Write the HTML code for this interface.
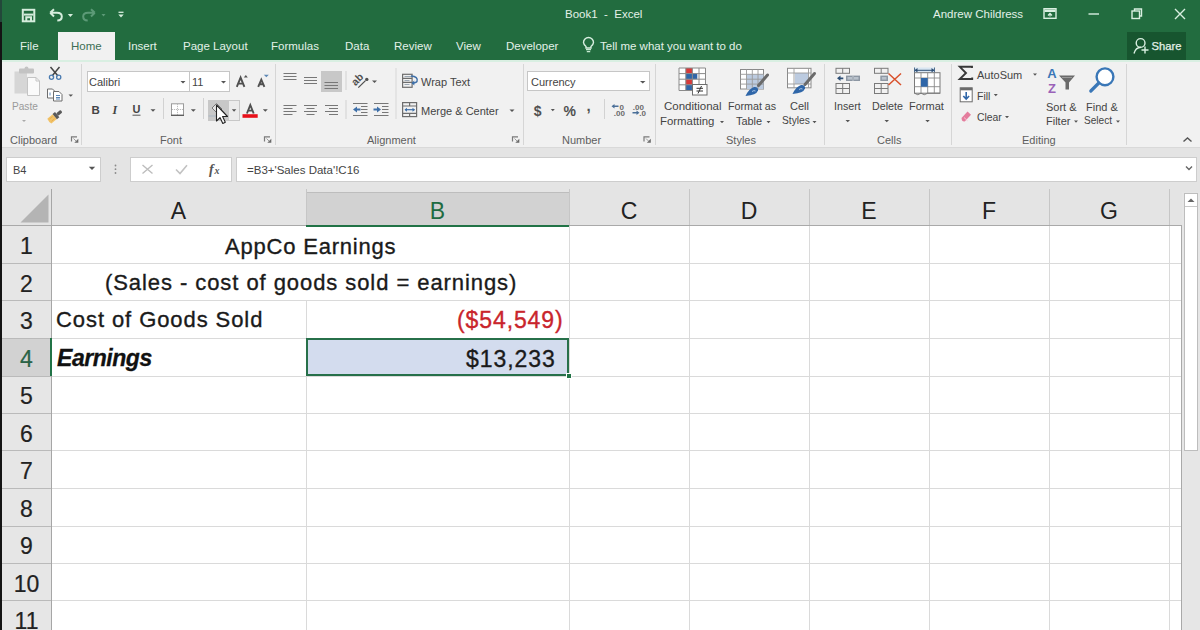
<!DOCTYPE html>
<html><head><meta charset="utf-8">
<style>
*{margin:0;padding:0;box-sizing:border-box}
html,body{width:1200px;height:630px;overflow:hidden;background:#fff;font-family:"Liberation Sans",sans-serif}
.a{position:absolute}
.t{position:absolute;white-space:pre;line-height:1}
#title{left:0;top:0;width:1200px;height:60px;background:#226c3f}
.tab{color:#e3f1e8;font-size:11.5px;top:41px}
.rib{left:0;top:60px;width:1200px;height:87px;background:#f1f1f1;border-top:2px solid #d9efe2}
.sep{position:absolute;width:1px;background:#d6d6d6}
.gl{color:#5e5e5e;font-size:11px;top:134.5px}
.rt{color:#444;font-size:11px}
.dd{position:absolute;width:0;height:0;border-left:2.5px solid transparent;border-right:2.5px solid transparent;border-top:3px solid #555}
.hl{position:absolute;height:1px;background:#d9d9d9}
.vl{position:absolute;width:1px;background:#d9d9d9}
.ch{position:absolute;top:192px;height:34px;background:#e6e6e6;font-size:23px;color:#222;text-align:center;line-height:34px}
.rh{position:absolute;left:2px;width:49px;background:#e6e6e6;font-size:22px;color:#222;text-align:center}
</style></head><body>
<!-- left dark strip -->

<div id="title" class="a"></div>
<!-- title bar text -->
<div class="t" style="left:565px;top:9px;font-size:11.5px;color:#e3f1e8">Book1  -  Excel</div>
<div class="t" style="left:933px;top:9px;font-size:11.5px;color:#e3f1e8">Andrew Childress</div>
<!-- tabs -->
<div class="a" style="left:58px;top:32px;width:57px;height:29px;background:#f1f1f1"></div>
<div class="t tab" style="left:20px">File</div>
<div class="t tab" style="left:71px;color:#3c6e55">Home</div>
<div class="t tab" style="left:128px">Insert</div>
<div class="t tab" style="left:183px">Page Layout</div>
<div class="t tab" style="left:271px">Formulas</div>
<div class="t tab" style="left:345px">Data</div>
<div class="t tab" style="left:394px">Review</div>
<div class="t tab" style="left:456px">View</div>
<div class="t tab" style="left:506px">Developer</div>
<div class="t tab" style="left:600px">Tell me what you want to do</div>
<div class="a" style="left:1127px;top:32px;width:59px;height:28px;background:#17552f"></div>
<div class="t tab" style="left:1151.5px;font-size:11.2px;-webkit-text-stroke:0.25px #e3f1e8">Share</div>

<!-- ribbon -->
<div class="a rib"></div>
<div class="a" style="left:0;top:147px;width:1200px;height:46px;background:#e4e4e4;border-top:1px solid #d9d9d9"></div>

<!-- group labels -->
<div class="t gl" style="left:10px">Clipboard</div>
<div class="t gl" style="left:160px">Font</div>
<div class="t gl" style="left:367px">Alignment</div>
<div class="t gl" style="left:562px">Number</div>
<div class="t gl" style="left:726px">Styles</div>
<div class="t gl" style="left:877px">Cells</div>
<div class="t gl" style="left:1022px">Editing</div>
<div class="sep" style="left:81px;top:64px;height:81px"></div>
<div class="sep" style="left:275px;top:64px;height:81px"></div>
<div class="sep" style="left:523px;top:64px;height:81px"></div>
<div class="sep" style="left:655px;top:64px;height:81px"></div>
<div class="sep" style="left:824px;top:64px;height:81px"></div>
<div class="sep" style="left:951px;top:64px;height:81px"></div>
<div class="sep" style="left:1126px;top:64px;height:81px"></div>

<!-- formula bar -->
<div class="a" style="left:6px;top:157px;width:95px;height:25px;background:#fff;border:1px solid #cdcdcd"></div>
<div class="t" style="left:13px;top:165px;font-size:11px;color:#444">B4</div>
<div class="a" style="left:130px;top:157px;width:102px;height:25px;background:#fff;border:1px solid #cdcdcd"></div>
<div class="a" style="left:236px;top:157px;width:961px;height:25px;background:#fff;border:1px solid #cdcdcd"></div>
<div class="t" style="left:247px;top:165px;font-size:11.5px;color:#444">=B3+'Sales Data'!C16</div>

<!-- sheet -->
<div class="a" style="left:2px;top:187px;width:1180px;height:39px;background:#e4e4e4"></div>
<div class="a" style="left:2px;top:226px;width:49px;height:404px;background:#e6e6e6"></div>
<div class="a" style="left:51px;top:226px;width:1131px;height:404px;background:#fff"></div>
<div class="a" style="left:2px;top:225px;width:1180px;height:1px;background:#a9a9a9"></div>
<div class="a" style="left:306px;top:191.5px;width:263px;height:34px;background:#d2d2d2;border-top:1px solid #bdbdbd;border-left:1px solid #bdbdbd"></div>
<div class="a" style="left:306px;top:225px;width:263px;height:2px;background:#217346"></div>
<div class="a" style="left:2px;top:338px;width:49px;height:38px;background:#d2d2d2"></div>
<svg class="a" style="left:0;top:185px" width="60" height="45"><polygon points="20.5,37.5 48.5,9.5 48.5,37.5" fill="#b4b4b4"/></svg>
<div class="a" style="left:306px;top:189px;width:1px;height:36px;background:#c6c6c6"></div>
<div class="a" style="left:569px;top:189px;width:1px;height:36px;background:#c6c6c6"></div>
<div class="a" style="left:689px;top:189px;width:1px;height:36px;background:#c6c6c6"></div>
<div class="a" style="left:809px;top:189px;width:1px;height:36px;background:#c6c6c6"></div>
<div class="a" style="left:929px;top:189px;width:1px;height:36px;background:#c6c6c6"></div>
<div class="a" style="left:1049px;top:189px;width:1px;height:36px;background:#c6c6c6"></div>
<div class="a" style="left:1169px;top:189px;width:1px;height:36px;background:#c6c6c6"></div>
<div class="a" style="left:51px;top:189px;width:1px;height:441px;background:#a6a6a6"></div>
<div class="a" style="left:2px;top:263px;width:49px;height:1px;background:#bababa"></div>
<div class="a" style="left:569px;top:263px;width:613px;height:1px;background:#dadada"></div>
<div class="a" style="left:52px;top:263px;width:517px;height:1px;background:#dadada"></div>
<div class="a" style="left:2px;top:300px;width:49px;height:1px;background:#bababa"></div>
<div class="a" style="left:52px;top:300px;width:1130px;height:1px;background:#dadada"></div>
<div class="a" style="left:2px;top:338px;width:49px;height:1px;background:#bababa"></div>
<div class="a" style="left:52px;top:338px;width:1130px;height:1px;background:#dadada"></div>
<div class="a" style="left:2px;top:376px;width:49px;height:1px;background:#bababa"></div>
<div class="a" style="left:52px;top:376px;width:1130px;height:1px;background:#dadada"></div>
<div class="a" style="left:2px;top:413px;width:49px;height:1px;background:#bababa"></div>
<div class="a" style="left:52px;top:413px;width:1130px;height:1px;background:#dadada"></div>
<div class="a" style="left:2px;top:450px;width:49px;height:1px;background:#bababa"></div>
<div class="a" style="left:52px;top:450px;width:1130px;height:1px;background:#dadada"></div>
<div class="a" style="left:2px;top:488px;width:49px;height:1px;background:#bababa"></div>
<div class="a" style="left:52px;top:488px;width:1130px;height:1px;background:#dadada"></div>
<div class="a" style="left:2px;top:526px;width:49px;height:1px;background:#bababa"></div>
<div class="a" style="left:52px;top:526px;width:1130px;height:1px;background:#dadada"></div>
<div class="a" style="left:2px;top:563px;width:49px;height:1px;background:#bababa"></div>
<div class="a" style="left:52px;top:563px;width:1130px;height:1px;background:#dadada"></div>
<div class="a" style="left:2px;top:600px;width:49px;height:1px;background:#bababa"></div>
<div class="a" style="left:52px;top:600px;width:1130px;height:1px;background:#dadada"></div>
<div class="a" style="left:2px;top:638px;width:49px;height:1px;background:#bababa"></div>
<div class="a" style="left:52px;top:638px;width:1130px;height:1px;background:#dadada"></div>
<div class="a" style="left:306px;top:301px;width:1px;height:329px;background:#dadada"></div>
<div class="a" style="left:569px;top:226px;width:1px;height:404px;background:#dadada"></div>
<div class="a" style="left:689px;top:226px;width:1px;height:404px;background:#dadada"></div>
<div class="a" style="left:809px;top:226px;width:1px;height:404px;background:#dadada"></div>
<div class="a" style="left:929px;top:226px;width:1px;height:404px;background:#dadada"></div>
<div class="a" style="left:1049px;top:226px;width:1px;height:404px;background:#dadada"></div>
<div class="a" style="left:1169px;top:226px;width:1px;height:404px;background:#dadada"></div>
<div class="a" style="left:1181px;top:226px;width:1px;height:404px;background:#a9a9a9"></div>
<div class="t" style="left:51px;width:255px;top:199.5px;text-align:center;font-size:23px;color:#222">A</div>
<div class="t" style="left:306px;width:263px;top:199.5px;text-align:center;font-size:23px;color:#1e6b41">B</div>
<div class="t" style="left:569px;width:120px;top:199.5px;text-align:center;font-size:23px;color:#222">C</div>
<div class="t" style="left:689px;width:120px;top:199.5px;text-align:center;font-size:23px;color:#222">D</div>
<div class="t" style="left:809px;width:120px;top:199.5px;text-align:center;font-size:23px;color:#222">E</div>
<div class="t" style="left:929px;width:120px;top:199.5px;text-align:center;font-size:23px;color:#222">F</div>
<div class="t" style="left:1049px;width:120px;top:199.5px;text-align:center;font-size:23px;color:#222">G</div>
<div class="t" style="left:2px;width:49px;top:235.3px;text-align:center;font-size:23px;-webkit-text-stroke:0.2px #222;color:#222">1</div>
<div class="t" style="left:2px;width:49px;top:272.8px;text-align:center;font-size:23px;-webkit-text-stroke:0.2px #222;color:#222">2</div>
<div class="t" style="left:2px;width:49px;top:310.3px;text-align:center;font-size:23px;-webkit-text-stroke:0.2px #222;color:#222">3</div>
<div class="t" style="left:2px;width:49px;top:347.8px;text-align:center;font-size:23px;-webkit-text-stroke:0.2px #2a6346;color:#2a6346">4</div>
<div class="t" style="left:2px;width:49px;top:385.3px;text-align:center;font-size:23px;-webkit-text-stroke:0.2px #222;color:#222">5</div>
<div class="t" style="left:2px;width:49px;top:422.8px;text-align:center;font-size:23px;-webkit-text-stroke:0.2px #222;color:#222">6</div>
<div class="t" style="left:2px;width:49px;top:460.3px;text-align:center;font-size:23px;-webkit-text-stroke:0.2px #222;color:#222">7</div>
<div class="t" style="left:2px;width:49px;top:497.8px;text-align:center;font-size:23px;-webkit-text-stroke:0.2px #222;color:#222">8</div>
<div class="t" style="left:2px;width:49px;top:535.3px;text-align:center;font-size:23px;-webkit-text-stroke:0.2px #222;color:#222">9</div>
<div class="t" style="left:2px;width:49px;top:572.8px;text-align:center;font-size:23px;-webkit-text-stroke:0.2px #222;color:#222">10</div>
<div class="t" style="left:2px;width:49px;top:610.3px;text-align:center;font-size:23px;-webkit-text-stroke:0.2px #222;color:#222">11</div>
<div class="a" style="left:50px;top:338px;width:2px;height:38px;background:#217346"></div>
<div class="a" style="left:306px;top:338px;width:263px;height:38px;background:#d3dcee;border:2px solid #27704a"></div>
<div class="a" style="left:566px;top:373px;width:6px;height:6px;background:#217346;border:1px solid #fff"></div>
<div class="t" style="left:225px;top:235.5px;font-size:22px;letter-spacing:0.8px;-webkit-text-stroke:0.35px #1a1a1a;color:#1a1a1a">AppCo Earnings</div>
<div class="t" style="left:105px;top:271.5px;font-size:22px;letter-spacing:0.93px;-webkit-text-stroke:0.35px #1a1a1a;color:#1a1a1a">(Sales - cost of goods sold = earnings)</div>
<div class="t" style="left:56px;top:308.5px;font-size:22px;letter-spacing:0.92px;-webkit-text-stroke:0.35px #1a1a1a;color:#1a1a1a">Cost of Goods Sold</div>
<div class="t" style="left:57px;top:346.5px;font-size:23px;letter-spacing:-0.45px;font-weight:bold;font-style:italic;color:#111;-webkit-text-stroke:0.3px #111">Earnings</div>
<div class="t" style="left:457px;top:308.5px;font-size:23px;letter-spacing:0.9px;color:#c9252c;-webkit-text-stroke:0.35px #c9252c">($54,549)</div>
<div class="t" style="left:466px;top:347.5px;font-size:23px;letter-spacing:0.95px;-webkit-text-stroke:0.35px #1a1a1a;color:#1a1a1a">$13,233</div>

<!-- scrollbar -->
<div class="a" style="left:1182px;top:192px;width:18px;height:438px;background:#e6e6e6"></div>
<div class="a" style="left:1184px;top:193px;width:14px;height:258px;background:#fff;border:1px solid #bdbdbd"></div>

<!-- ribbon text -->
<div class="t rt" style="left:12px;top:102px;color:#9a9a9a;font-size:10.1px">Paste</div>
<div class="a" style="left:87px;top:71px;width:103px;height:21px;background:#fff;border:1px solid #c6c6c6"></div>
<div class="a" style="left:189px;top:71px;width:41px;height:21px;background:#fff;border:1px solid #c6c6c6"></div>
<div class="t rt" style="left:89px;top:77px">Calibri</div>
<div class="t rt" style="left:192px;top:77px">11</div>
<div class="a" style="left:208px;top:100px;width:21px;height:21px;background:#c8c8c8"></div>
<div class="a" style="left:228px;top:100px;width:12px;height:21px;background:#ececec;border:1px solid #c8c8c8"></div>
<div class="a" style="left:321px;top:71px;width:21px;height:21px;background:#c8c8c8"></div>
<div class="t rt" style="left:421px;top:77px">Wrap Text</div>
<div class="t rt" style="left:421px;top:106px">Merge &amp; Center</div>
<div class="a" style="left:527px;top:71px;width:123px;height:20px;background:#fff;border:1px solid #c6c6c6"></div>
<div class="t rt" style="left:531px;top:77px">Currency</div>
<div class="t rt" style="left:664px;top:101px;font-size:11.5px">Conditional</div>
<div class="t rt" style="left:660px;top:116px;font-size:11.4px">Formatting</div>
<div class="t rt" style="left:728px;top:101px;font-size:10.7px">Format as</div>
<div class="t rt" style="left:736px;top:116px;font-size:10.9px">Table</div>
<div class="t rt" style="left:790px;top:101px">Cell</div>
<div class="t rt" style="left:782px;top:116px;font-size:10.2px">Styles</div>
<div class="t rt" style="left:834px;top:101px;font-size:10.7px">Insert</div>
<div class="t rt" style="left:872px;top:101px;font-size:10.7px">Delete</div>
<div class="t rt" style="left:909px;top:101px">Format</div>
<div class="t rt" style="left:977px;top:70px">AutoSum</div>
<div class="t rt" style="left:977px;top:91px;font-size:10.5px">Fill</div>
<div class="t rt" style="left:977px;top:113px;font-size:10.4px">Clear</div>
<div class="t rt" style="left:1046px;top:102px">Sort &amp;</div>
<div class="t rt" style="left:1046px;top:116px">Filter</div>
<div class="t rt" style="left:1086px;top:102px">Find &amp;</div>
<div class="t rt" style="left:1084px;top:116px;font-size:10.1px">Select</div>

<svg class="a" style="left:0;top:0" width="1200" height="630" viewBox="0 0 1200 630">
<!-- ===== title bar icons ===== -->
<g fill="none" stroke="#d6eddd" stroke-width="2">
  <rect x="22.8" y="9.8" width="11.5" height="11.5"/>
  <path d="M24 14.6 H33.5"/>
  <path d="M26.3 21 V17.3 H31 V21"/>
  <path d="M50.2 12.8 L54 9.2 M50.2 12.8 L54 16.4 M51 12.8 H57 Q61.8 12.8 61.8 16.6 Q61.8 20.6 57.3 20.6"/>
</g>
<path d="M67.8 14 h5.2 l-2.6 3z" fill="#d6eddd"/>
<g fill="none" stroke="#5c9a77" stroke-width="2">
  <path d="M94.8 12.8 L91 9.2 M94.8 12.8 L91 16.4 M94 12.8 H88 Q83.2 12.8 83.2 16.6 Q83.2 20.6 87.7 20.6"/>
</g>
<path d="M101.5 14 h4 l-2 2.5z" fill="#5c9a77"/>
<path d="M118.5 12.3 h5" stroke="#d6eddd" stroke-width="1.3"/>
<path d="M118.3 14.5 h5.4 l-2.7 3z" fill="#d6eddd"/>
<!-- right window controls -->
<g fill="none" stroke="#d9efe1" stroke-width="1.4">
  <rect x="1044" y="8.7" width="12" height="9.6"/>
  <path d="M1088.5 14 H1099"/>
  <rect x="1132" y="11" width="7.5" height="7.5"/>
  <path d="M1134.5 11 V9 H1141.5 V16 H1139.5"/>
  <path d="M1175 9 L1185 19 M1185 9 L1175 19"/>
  <circle cx="1140.6" cy="43" r="4.4"/>
  <path d="M1134 53.5 Q1135.5 47.5 1141 47.2"/>
  <path d="M1141.5 50 H1148.5 M1145 46.5 V53.5"/>
  <path d="M586 46.5 Q583.5 44 583.5 42.5 A5 5 0 0 1 593.5 42.5 Q593.5 44 591 46.5 V48 H586 Z"/>
</g>
<path d="M1044.5 9.5 h11 v2.5 h-11z" fill="#d9efe1"/>
<path d="M1048 15.5 l2 -2.2 l2 2.2 M1050 13.5 v3" stroke="#d9efe1" stroke-width="1.2" fill="none"/>
<path d="M586 49 h5 v1.3 h-5z M586.8 51 h3.4 v1.2 h-3.4z" fill="#c8ecd3"/>

<!-- ===== Clipboard ===== -->
<rect x="14.5" y="71.5" width="12.5" height="22" fill="#d6d6d6"/>
<rect x="19" y="68.5" width="15" height="5" rx="1" fill="#c3c3c3"/>
<circle cx="26.5" cy="68.5" r="2" fill="#c3c3c3"/>
<path d="M27.5 77.5 H36 L39.5 81 V95.5 H27.5 Z" fill="#fafafa" stroke="#c4c4c4" stroke-width="1"/>
<path d="M36 77.5 V81 H39.5" fill="none" stroke="#c4c4c4" stroke-width="1"/>
<path d="M22 120 h4 l-2 2z" fill="#aaa"/>
<!-- scissors -->
<path d="M50.5 67 L58 76 M59.5 67 L52 76" stroke="#454545" stroke-width="1.5" fill="none"/>
<circle cx="51.5" cy="77.2" r="2.1" fill="none" stroke="#4a7bb0" stroke-width="1.3"/>
<circle cx="58.7" cy="77.2" r="2.1" fill="none" stroke="#4a7bb0" stroke-width="1.3"/>
<!-- copy -->
<path d="M47.5 89 H52.5 L55.5 92 V98 H47.5 Z" fill="#fff" stroke="#6d6d6d" stroke-width="1"/>
<path d="M53.5 91.5 H59 L62 94.5 V101 H53.5 Z" fill="#fff" stroke="#6d6d6d" stroke-width="1"/>
<path d="M50 92.5 v3 M56 95.5 h4 M56 97.5 h4 M56 99 h4" stroke="#4a7bb0" stroke-width="0.9"/>
<path d="M68.5 94.5 h4.5 l-2.25 2.2z" fill="#555"/>
<!-- format painter -->
<g transform="translate(55.5,116) rotate(-40)">
  <path d="M-8 -3.2 H-1 V3.2 H-8 Q-9 0 -8 -3.2z" fill="#f2c267"/>
  <path d="M-6.5 -1.5 h4 M-6.5 1.5 h4" stroke="#e0a94a" stroke-width="0.7"/>
  <rect x="-1" y="-3.4" width="3.2" height="6.8" fill="#5a5a5a"/>
  <rect x="2.2" y="-1.6" width="5.5" height="3.2" rx="1" fill="#5a5a5a"/>
</g>
<path d="M71.5 141.5 V136.8 H77.0" fill="none" stroke="#7a7a7a" stroke-width="1.2"/><path d="M78.3 138.8 V142.8 H74.3 Z" fill="#6a6a6a"/><path d="M73.5 138.5 l3 3" stroke="#888" stroke-width="0.8"/>

<!-- ===== Font ===== -->
<path d="M180.5 81 h5 l-2.5 2.5z M221 81 h5 l-2.5 2.5z" fill="#555"/>
<g fill="none" stroke="#505050" stroke-width="1.9">
  <path d="M236.8 86.8 L240.6 77.6 L244.4 86.8 M238.3 83.6 h4.6"/>
  <path d="M258.2 86.8 L261.3 79.6 L264.4 86.8 M259.5 84.2 h3.8"/>
</g>
<path d="M243.8 77.5 l2 -2.5 l2 2.5z" fill="#555"/>
<path d="M263.8 74.7 h5 l-2.5 2.5z" fill="#5c87b5"/>
<text x="91.5" y="113.6" font-family="Liberation Sans" font-weight="bold" font-size="11.5" fill="#444">B</text>
<text x="112.5" y="113.6" font-family="Liberation Serif" font-style="italic" font-weight="bold" font-size="12" fill="#444">I</text>
<text x="132.5" y="112.8" font-family="Liberation Sans" font-weight="bold" font-size="11" fill="#444">U</text>
<path d="M132.5 115.2 h8" stroke="#555" stroke-width="1"/>
<path d="M150.5 109.3 h5 l-2.5 2.5z M190.8 109.3 h5 l-2.5 2.5z M231.8 109.3 h4.5 l-2.25 2.5z M262.8 109.3 h5 l-2.5 2.5z" fill="#555"/>
<rect x="163" y="98" width="1" height="21" fill="#d2d2d2"/>
<rect x="203" y="98" width="1" height="21" fill="#d2d2d2"/>
<rect x="171.5" y="103.8" width="12" height="11.5" fill="#fff" stroke="#9b9b9b" stroke-width="1"/>
<path d="M177.5 104 v11 M172 109.5 h11" stroke="#b5b5b5" stroke-width="0.9" stroke-dasharray="1.2 0.8"/>
<path d="M171 115.3 h13" stroke="#555" stroke-width="1.2"/>
<!-- fill color bucket (under cursor) -->
<path d="M212 108 L216.5 103.5 L222 109 L217.5 113.5 Z" fill="#e2e2e2" stroke="#777" stroke-width="1"/>
<path d="M208.5 116 h19" stroke="#b8bfc6" stroke-width="2"/>
<!-- cursor -->
<path d="M216.5 105 V121 L220 117.6 L222.8 123.5 L225.3 122.3 L222.6 116.5 H227.5 Z" fill="#fff" stroke="#222" stroke-width="1.1" stroke-linejoin="round"/>
<!-- font color -->
<path d="M246.9 113.5 L250.3 105 L253.7 113.5 M248.2 110.6 h4.2" fill="none" stroke="#505050" stroke-width="1.9"/>
<rect x="242.5" y="114.2" width="15.2" height="3.6" fill="#e8101a"/>
<path d="M264.5 141.5 V136.8 H270.0" fill="none" stroke="#7a7a7a" stroke-width="1.2"/><path d="M271.3 138.8 V142.8 H267.3 Z" fill="#6a6a6a"/><path d="M266.5 138.5 l3 3" stroke="#888" stroke-width="0.8"/>

<!-- ===== Alignment ===== -->
<g stroke="#777" stroke-width="1.2">
  <path d="M283.5 73.5 h13 M283.5 76.5 h13 M283.5 79.5 h13"/>
  <path d="M304 77.5 h13 M304 80.5 h13 M304 83.5 h13"/>
  <path d="M324.5 82.5 h13.5 M324.5 85.5 h13.5 M324.5 88.5 h13.5"/>
  <path d="M283.5 105.5 h13 M283.5 108.5 h9 M283.5 111.5 h13 M283.5 114.5 h9"/>
  <path d="M304 105.5 h13 M306.5 108.5 h8 M304 111.5 h13 M306.5 114.5 h8"/>
  <path d="M325 105.5 h13 M329 108.5 h9 M325 111.5 h13 M329 114.5 h9"/>
  <path d="M353 103.5 h14.5 M361 106.5 h6.5 M361 109.5 h6.5 M361 112.5 h6.5 M353 115.5 h14.5"/>
  <path d="M374 103.5 h14.5 M382 106.5 h6.5 M382 109.5 h6.5 M382 112.5 h6.5 M374 115.5 h14.5"/>
</g>
<path d="M353 109.5 l4 -3 v2 h3.5 v2 h-3.5 v2z" fill="#3e6fa8"/>
<path d="M381 109.5 l-4 -3 v2 h-3.5 v2 h3.5 v2z" fill="#3e6fa8"/>
<rect x="345.5" y="71" width="1" height="19" fill="#d2d2d2"/>
<rect x="345.5" y="100" width="1" height="19" fill="#d2d2d2"/>
<rect x="395.5" y="68" width="1" height="51" fill="#d8d8d8"/>
<!-- orientation -->
<g transform="translate(357.5,79.5) rotate(-45)">
  <text x="-6.2" y="3.2" font-family="Liberation Sans" font-weight="bold" font-size="10.5" fill="#505050">ab</text>
</g>
<path d="M358.3 87.6 L365.5 80.6" stroke="#505050" stroke-width="1.3"/>
<circle cx="366.8" cy="79.4" r="1.7" fill="#505050"/>
<path d="M372 80.5 h5 l-2.5 2.5z" fill="#555"/>
<!-- wrap text -->
<g fill="none" stroke="#6d6d6d" stroke-width="1.2">
  <rect x="402.6" y="74.3" width="9.5" height="13"/>
  <path d="M403 78.3 h9 M403 82.3 h9"/>
</g>
<path d="M404.5 76.5 h8 M404.5 80.5 h5 M404.5 84.5 h5" stroke="#9aa6b2" stroke-width="1.2"/>
<path d="M411 76 Q418.5 76.5 417 81.5 Q416 83 412 83" fill="none" stroke="#3e6fa8" stroke-width="1.4"/>
<path d="M411.5 83 l2.8 -2.5 v5z" fill="#3e6fa8"/>
<!-- merge -->
<g fill="none" stroke="#6d6d6d" stroke-width="1.2">
  <rect x="402.6" y="102.6" width="14" height="14"/>
  <path d="M403 106 h13.5 M403 113.3 h13.5 M409.6 103 v3 M409.6 113.3 v3"/>
</g>
<path d="M405 109.7 h9.5" stroke="#3e6fa8" stroke-width="1.2"/>
<path d="M404.5 109.7 l2.5 -2 v4z M415 109.7 l-2.5 -2 v4z" fill="#3e6fa8"/>
<path d="M509.5 109.5 h5 l-2.5 2.5z" fill="#555"/>
<path d="M512.5 141.5 V136.8 H518.0" fill="none" stroke="#7a7a7a" stroke-width="1.2"/><path d="M519.3 138.8 V142.8 H515.3 Z" fill="#6a6a6a"/><path d="M514.5 138.5 l3 3" stroke="#888" stroke-width="0.8"/>

<!-- ===== Number ===== -->
<path d="M640 81 h5.5 l-2.75 2.5z" fill="#555"/>
<text x="533.8" y="116" font-family="Liberation Sans" font-weight="bold" font-size="14" fill="#505050">$</text>
<path d="M550.8 109 h4 l-2 2.3z" fill="#555"/>
<text x="563.5" y="115.6" font-family="Liberation Sans" font-size="14" font-weight="bold" fill="#505050">%</text>
<text x="586.5" y="111" font-family="Liberation Sans" font-weight="bold" font-size="15" fill="#505050">,</text>
<rect x="604" y="99" width="1" height="20" fill="#d2d2d2"/>
<g font-family="Liberation Sans" font-size="8" fill="#6b6b6b" font-weight="bold">
  <text x="619.5" y="109.8">0</text>
  <text x="613.8" y="116.3">.00</text>
  <text x="632.8" y="109.8">.00</text>
  <text x="639.2" y="116.3">.0</text>
</g>
<path d="M611.5 106.3 l3 -2.3 v1.6 h4 v1.4 h-4 v1.6z" fill="#4a6f98"/>
<path d="M639.5 112.8 l-3 -2.3 v1.6 h-4 v1.4 h4 v1.6z" fill="#4a6f98"/>
<path d="M644.0 141.5 V136.8 H649.5" fill="none" stroke="#7a7a7a" stroke-width="1.2"/><path d="M650.8 138.8 V142.8 H646.8 Z" fill="#6a6a6a"/><path d="M646.0 138.5 l3 3" stroke="#888" stroke-width="0.8"/>

<!-- ===== Styles ===== -->
<!-- conditional formatting -->
<rect x="679" y="68" width="26.5" height="22.5" fill="#fff"/>
<rect x="685.8" y="68" width="6.6" height="5.6" fill="#d63a3a"/>
<rect x="685.8" y="73.6" width="11.5" height="5.6" fill="#2f66a8"/>
<rect x="685.8" y="79.2" width="6.6" height="5.6" fill="#d63a3a"/>
<rect x="685.8" y="84.8" width="6.6" height="5.6" fill="#2f66a8"/>
<g fill="none" stroke="#8a8a8a" stroke-width="1">
  <path d="M679 68 h26.5 v22.5 h-26.5z M685.8 68 v22.5 M692.4 68 v22.5 M699 68 v22.5 M679 73.6 h26.5 M679 79.2 h26.5 M679 84.8 h26.5"/>
</g>
<rect x="692.5" y="84.5" width="14.5" height="10.5" fill="#fff" stroke="#6d6d6d" stroke-width="1"/>
<path d="M696.5 88.3 h6.5 M696.5 91 h6.5 M701.5 86 l-3.5 7.5" stroke="#333" stroke-width="1"/>
<!-- format as table -->
<rect x="740.5" y="69.5" width="23" height="19.5" fill="#fff" stroke="#8a8a8a" stroke-width="1"/>
<rect x="746.5" y="74.3" width="17" height="14.7" fill="#bccbe0"/>
<g stroke="#9a9a9a" stroke-width="0.9" fill="none">
  <path d="M746.5 69.5 v19.5 M752.3 69.5 v19.5 M758 69.5 v19.5 M740.5 74.3 h23 M740.5 79.2 h23 M740.5 84.1 h23"/>
</g>
<path d="M767.5 75 L758.5 85.5" stroke="#6b6b6b" stroke-width="3" stroke-linecap="round"/>
<path d="M745.5 96 Q749 88.5 754 87 Q758.5 86.5 758 90.5 Q756.5 95 745.5 96z" fill="#2f66a8"/>
<path d="M752 91.5 q2 -1.5 3.5 -0.5" stroke="#a9c4e6" stroke-width="1" fill="none"/>
<!-- cell styles -->
<rect x="787.5" y="68.3" width="23.5" height="19.5" fill="#fff" stroke="#8a8a8a" stroke-width="1"/>
<rect x="795" y="73" width="13" height="11" fill="#bccbe0"/>
<g stroke="#9a9a9a" stroke-width="0.9" fill="none">
  <path d="M794 68.3 v19.5 M787.5 73 h23.5 M787.5 84 h23.5 M808.5 68.3 v19.5"/>
</g>
<path d="M814.5 73.5 L805 84.5" stroke="#6b6b6b" stroke-width="3" stroke-linecap="round"/>
<path d="M792.5 94 Q796 86.5 801 85 Q805.5 84.5 805 88.5 Q803.5 93 792.5 94z" fill="#2f66a8"/>
<path d="M799 89.5 q2 -1.5 3.5 -0.5" stroke="#a9c4e6" stroke-width="1" fill="none"/>
<path d="M720 121 h4 l-2 2.2z M766.5 121 h4 l-2 2.2z M812.5 121 h4 l-2 2.2z" fill="#555"/>

<!-- ===== Cells ===== -->
<g fill="none" stroke="#7a7a7a" stroke-width="1">
  <rect x="836" y="68.3" width="13.5" height="5"/>
  <path d="M842.7 68.3 v5"/>
  <rect x="836" y="83.5" width="13.5" height="10"/>
  <path d="M842.7 83.5 v10 M836 88.5 h13.5"/>
  <rect x="874.5" y="68.3" width="13.5" height="5"/>
  <path d="M881.2 68.3 v5"/>
  <rect x="874.5" y="83.5" width="13.5" height="10"/>
  <path d="M881.2 83.5 v10 M874.5 88.5 h13.5"/>
</g>
<rect x="846" y="75.6" width="14" height="5.4" fill="#8d97a3"/>
<path d="M853 75.6 v5.4" stroke="#cfd5dc" stroke-width="0.8"/>
<rect x="847.5" y="77" width="4.5" height="2.6" fill="#b9c2cc"/>
<rect x="854" y="77" width="4.5" height="2.6" fill="#b9c2cc"/>
<path d="M837 78.3 l3.5 -2.8 v1.9 h2.8 v1.8 h-2.8 v1.9z" fill="#2e4f75"/>
<rect x="880.3" y="75.6" width="7.7" height="5.4" fill="#8d97a3"/>
<rect x="881.8" y="77" width="4.7" height="2.6" fill="#b9c2cc"/>
<path d="M888.5 73.5 L901 85 M901 73.5 L888.5 85" stroke="#d9512c" stroke-width="1.5"/>
<!-- format -->
<rect x="914" y="67.5" width="21" height="5.5" fill="#d9e6f2"/>
<path d="M915 70.3 h19" stroke="#2e4f75" stroke-width="1"/>
<path d="M914.5 70.3 l3 -2.3 v4.6z M934.5 70.3 l-3 -2.3 v4.6z" fill="#2e4f75"/>
<path d="M914.5 67.5 v5.5 M934.5 67.5 v5.5" stroke="#2e4f75" stroke-width="0.8"/>
<rect x="914.5" y="72.7" width="25.5" height="20.5" fill="#fff" stroke="#7a7a7a" stroke-width="1"/>
<g stroke="#8a8a8a" stroke-width="0.9" fill="none">
  <path d="M921 72.7 v20.5 M927.7 72.7 v20.5 M934.3 72.7 v20.5 M914.5 78 h25.5 M914.5 86.7 h25.5"/>
</g>
<rect x="921" y="78" width="6.7" height="8.7" fill="#2f66a8"/>
<path d="M914.5 93.2 q3.2 3 6.5 0 q3.3 3 6.7 0 M927.7 93.2 h12.3" fill="none" stroke="#7a7a7a" stroke-width="1"/>
<path d="M845.5 120 h4.5 l-2.25 2.3z M884.5 120 h4.5 l-2.25 2.3z M925.3 120 h4.5 l-2.25 2.3z" fill="#555"/>

<!-- ===== Editing ===== -->
<path d="M972 68 V66.8 H959.8 L966 73 L959.8 79 H972.2 V77.6" fill="none" stroke="#383838" stroke-width="1.9"/>
<rect x="960.2" y="87.8" width="12" height="14" fill="#fff" stroke="#6b6b6b" stroke-width="1"/>
<rect x="960.2" y="87.8" width="12" height="2.5" fill="#6b6b6b"/>
<path d="M966.2 92 v7 M963.3 96 l2.9 3 l2.9 -3" fill="none" stroke="#2f66a8" stroke-width="1.6"/>
<path d="M961.5 118 L967.5 111.5 L971 114.8 L965 121.3 Q963.5 122 962 120.5 Z" fill="#e47d9d"/>
<path d="M964 117.5 l3.5 3.2" stroke="#f6c2d2" stroke-width="1"/>
<path d="M1033 73.5 h4 l-2 2.2z M993.8 94 h4 l-2 2.2z M1005 116 h4 l-2 2.2z M1074 120.5 h4 l-2 2.2z M1116 120.5 h4 l-2 2.2z" fill="#555"/>
<text x="1047.3" y="78.4" font-family="Liberation Sans" font-weight="bold" font-size="13" fill="#3a77b7">A</text>
<text x="1048" y="93.2" font-family="Liberation Sans" font-weight="bold" font-size="13" fill="#9a62b8">Z</text>
<path d="M1059 75.5 H1075 L1069 82.5 V89.5 H1065.5 V82.5 Z" fill="#6b6b6b"/>
<path d="M1062 77.5 H1072" stroke="#9a9a9a" stroke-width="1"/>
<circle cx="1105" cy="76.8" r="8.4" fill="#fff" stroke="#3a77b7" stroke-width="2.4"/>
<path d="M1098.8 83 L1090.8 91" stroke="#3a77b7" stroke-width="3.2" stroke-linecap="round"/>
<path d="M1183.5 141.5 l4 -3.5 l4 3.5" fill="none" stroke="#555" stroke-width="1.4"/>

<!-- ===== formula bar ===== -->
<path d="M88.8 166.8 h6.4 l-3.2 3.3z" fill="#555"/>
<circle cx="115.5" cy="165.5" r="0.9" fill="#8a8a8a"/>
<circle cx="115.5" cy="169.2" r="0.9" fill="#8a8a8a"/>
<circle cx="115.5" cy="173" r="0.9" fill="#8a8a8a"/>
<path d="M142.5 165 L152.5 173.5 M152.5 165 L142.5 173.5" stroke="#bdbdbd" stroke-width="1.4"/>
<path d="M176 169.5 L180 173.5 L187 165.3" fill="none" stroke="#c2c2c2" stroke-width="1.6"/>
<text x="209" y="173.5" font-family="Liberation Serif" font-style="italic" font-weight="bold" font-size="14" fill="#555">f</text>
<text x="214.5" y="174" font-family="Liberation Serif" font-style="italic" font-weight="bold" font-size="10" fill="#555">x</text>
<path d="M1186 166.5 l3 3 l3 -3" fill="none" stroke="#666" stroke-width="1.4"/>
<!-- scrollbar up arrow -->
<path d="M1187.5 202 h7 l-3.5 -3.5z" fill="#666"/>
<path d="M1185 206.5 h12" stroke="#c8c8c8" stroke-width="1"/>
</svg>

<div class="a" style="left:0;top:0;width:2px;height:630px;background:#141414"></div>
<div class="a" style="left:0;top:0;width:2px;height:22px;background:#23483a"></div>

</body></html>
